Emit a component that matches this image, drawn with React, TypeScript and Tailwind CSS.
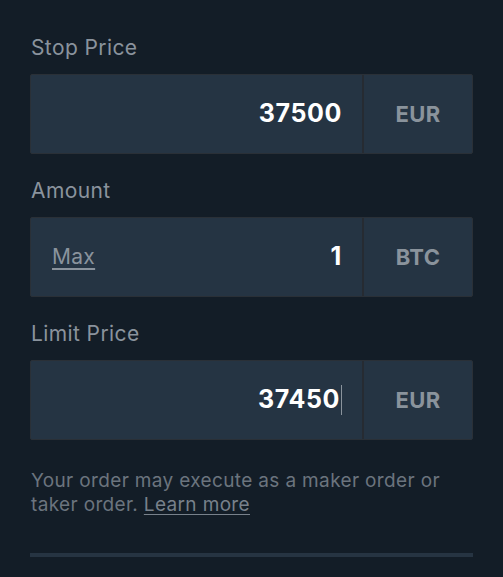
const font = { fontFamily: "Inter, 'Noto Sans', sans-serif" };

type FieldProps = {
  label: string;
  value: string;
  unit: string;
  max?: boolean;
  caret?: boolean;
};

function Field({ label, value, unit, max, caret }: FieldProps) {
  return (
    <div className="mb-[20px]">
      <p className="mb-[9px] pl-px text-[21px] leading-[34px] tracking-[0.4px] text-[#8a939d]">{label}</p>
      <div className="flex h-[80px] overflow-hidden rounded-[2px] border border-[#2a3037] bg-[#253443]">
        <div className="flex flex-1 items-center pl-[21px] pr-[20px]">
          {max && (
            <span className="text-[21px] tracking-[0.3px] text-[#8a939d] underline decoration-[2px] underline-offset-[4px]">
              Max
            </span>
          )}
          <span className="ml-auto flex items-center text-[25px] font-bold tracking-[0.6px] text-white">
            {value}
            {caret && <span className="ml-px h-[30px] w-px bg-[#8a939c]" />}
          </span>
        </div>
        <div className="flex w-[110px] items-center justify-center border-l-2 border-[#262b32] text-[22px] font-bold tracking-[0.3px] text-[#8a939c]">
          {unit}
        </div>
      </div>
    </div>
  );
}

export default function App() {
  return (
    <div className="min-h-[577px] w-[503px] bg-[#131d27] px-[30px] pt-[31px]" style={font}>
      <Field label="Stop Price" value="37500" unit="EUR" />
      <Field label="Amount" value="1" unit="BTC" max />
      <Field label="Limit Price" value="37450" unit="EUR" caret />
      <p className="mt-[29px] pl-px text-[19px] leading-[24px] tracking-[0.35px] text-[#6b747e]">
        Your order may execute as a maker order or
        <br />
        taker order.{" "}
        <a href="#" className="text-[#78818b] underline underline-offset-[3px]">
          Learn more
        </a>
      </p>
      <div className="mt-[36px] h-[4px] bg-[#263442]" />
    </div>
  );
}
